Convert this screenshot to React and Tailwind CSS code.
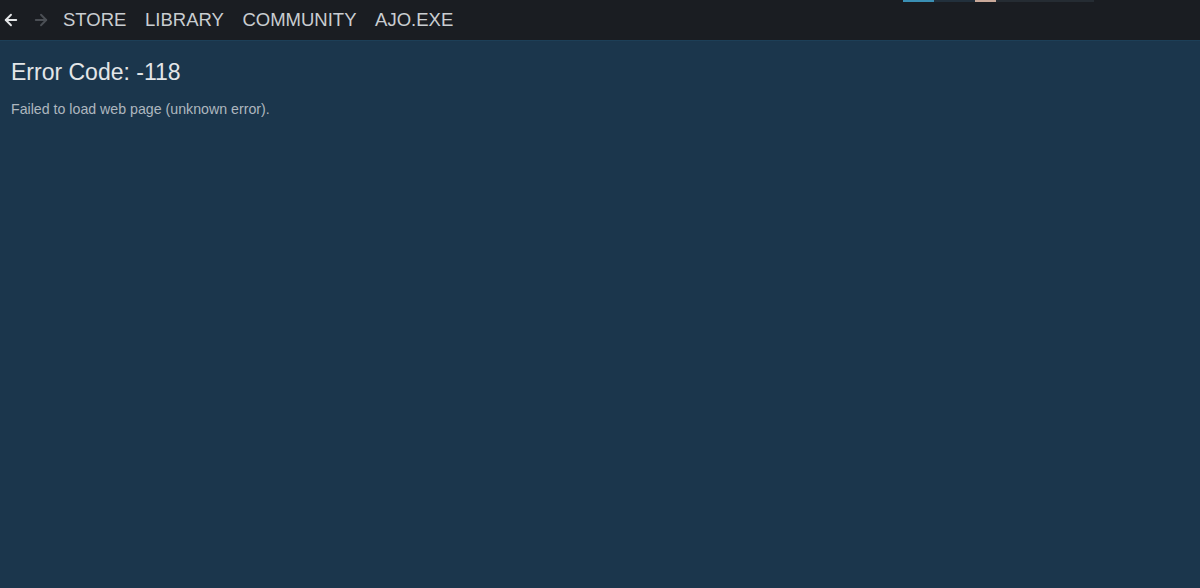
import { ArrowLeft, ArrowRight } from 'lucide-react';

const navItems = ['STORE', 'LIBRARY', 'COMMUNITY', 'AJO.EXE'];

const App = () => {
  return (
    <div className="w-[1200px] h-[588px] flex flex-col bg-[#1b364c] overflow-hidden" style={{ fontFamily: '"Liberation Sans", Arial, sans-serif' }}>
      {/* title bar */}
      <div className="relative h-[41px] shrink-0 flex items-center bg-[#1a1d22] border-b border-[#1d3f57]">
        <div className="flex items-center pl-[2px] gap-[12px]">
          <ArrowLeft size={18} strokeWidth={2.5} className="text-[#e4e6e8]" />
          <ArrowRight size={18} strokeWidth={2.5} className="text-[#4b4f55]" />
        </div>
        <div className="flex items-center gap-[18.6px] ml-[13px] text-[18.5px] text-[#c9cdd1]">
          {navItems.map((item) => (
            <span key={item}>{item}</span>
          ))}
        </div>
        {/* account strip peeking in from the top */}
        <div className="absolute top-0 left-[903px] flex items-start">
          <div className="w-[31px] h-[2px] bg-[#3a8fb4]" />
          <div className="w-[41px] h-[2px] bg-[#22303c]" />
          <div className="w-[21px] h-[2px] bg-[#c9a99a]" />
          <div className="w-[98px] h-[2px] bg-[#252c33]" />
        </div>
      </div>

      {/* error message */}
      <div className="px-[11px] pt-[18px]">
        <h1 className="text-[23px] leading-[27px] text-[#e3e6e8]">Error Code: -118</h1>
        <p className="mt-[13px] text-[14.2px] text-[#aeb7bf]">Failed to load web page (unknown error).</p>
      </div>
    </div>
  );
};

export default App;
